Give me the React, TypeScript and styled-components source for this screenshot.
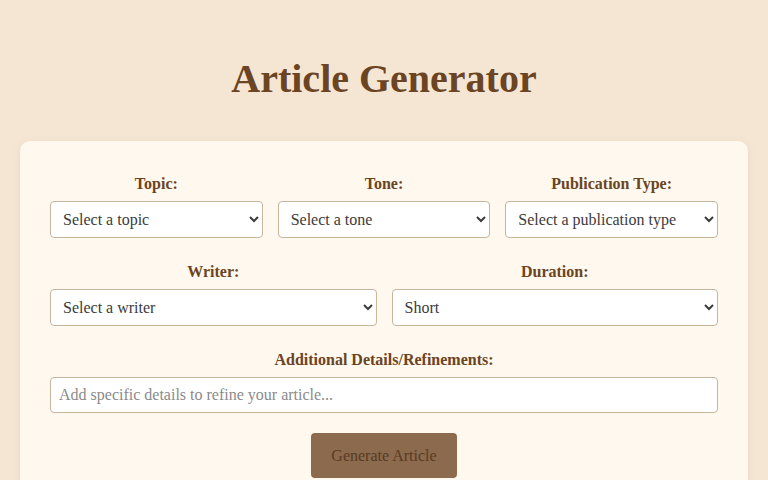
import React from 'react';
import styled, { createGlobalStyle } from 'styled-components';

const GlobalStyle = createGlobalStyle`
  body {
    margin: 0;
    background: #f5e6d3;
    font-family: "Liberation Serif", "Times New Roman", serif;
  }
`;

const Page = styled.div`
  padding: 0 20px;
`;

const Title = styled.h1`
  margin: 0;
  padding: 55px 0 38px;
  text-align: center;
  font-size: 40px;
  line-height: 48px;
  font-weight: 700;
  color: #6b4423;
`;

const Card = styled.div`
  background: #fff8ee;
  border-radius: 10px;
  box-shadow: 0 2px 8px rgba(107, 68, 35, 0.08);
  padding: 34px 30px 30px;
  display: flex;
  flex-direction: column;
  gap: 24.5px;
`;

const Row = styled.div<{ $cols: number }>`
  display: grid;
  grid-template-columns: repeat(${(p) => p.$cols}, 1fr);
  gap: 15px;
`;

const Field = styled.div`
  display: flex;
  flex-direction: column;
`;

const Label = styled.label`
  text-align: center;
  font-size: 16px;
  line-height: 18.4px;
  font-weight: 700;
  color: #6b4423;
  margin-bottom: 8px;
`;

const Select = styled.select`
  height: 37px;
  padding: 0 8px;
  border: 1px solid #c9b49c;
  border-radius: 4px;
  background: #fff;
  font-family: inherit;
  font-size: 16px;
  color: #3b3b3b;
`;

const Input = styled.input`
  height: 36px;
  padding: 0 8px;
  border: 1px solid #c9b49c;
  border-radius: 4px;
  background: #fff;
  font-family: inherit;
  font-size: 16px;
  box-sizing: border-box;
  &::placeholder {
    color: #8a8a8a;
  }
`;

const Actions = styled.div`
  display: flex;
  justify-content: center;
  margin-top: -4.5px;
`;

const Button = styled.button`
  width: 146px;
  height: 45px;
  border: none;
  border-radius: 4px;
  background: #8b6a4e;
  color: #5a3b22;
  font-family: inherit;
  font-size: 16px;
`;

const App = () => {
  return (
    <Page>
      <GlobalStyle />
      <Title>Article Generator</Title>
      <Card>
        <Row $cols={3}>
          <Field>
            <Label>Topic:</Label>
            <Select defaultValue="">
              <option value="">Select a topic</option>
            </Select>
          </Field>
          <Field>
            <Label>Tone:</Label>
            <Select defaultValue="">
              <option value="">Select a tone</option>
            </Select>
          </Field>
          <Field>
            <Label>Publication Type:</Label>
            <Select defaultValue="">
              <option value="">Select a publication type</option>
            </Select>
          </Field>
        </Row>
        <Row $cols={2}>
          <Field>
            <Label>Writer:</Label>
            <Select defaultValue="">
              <option value="">Select a writer</option>
            </Select>
          </Field>
          <Field>
            <Label>Duration:</Label>
            <Select defaultValue="short">
              <option value="short">Short</option>
            </Select>
          </Field>
        </Row>
        <Row $cols={1}>
          <Field>
            <Label>Additional Details/Refinements:</Label>
            <Input placeholder="Add specific details to refine your article..." />
          </Field>
        </Row>
        <Actions>
          <Button disabled>Generate Article</Button>
        </Actions>
      </Card>
    </Page>
  );
};

export default App;
